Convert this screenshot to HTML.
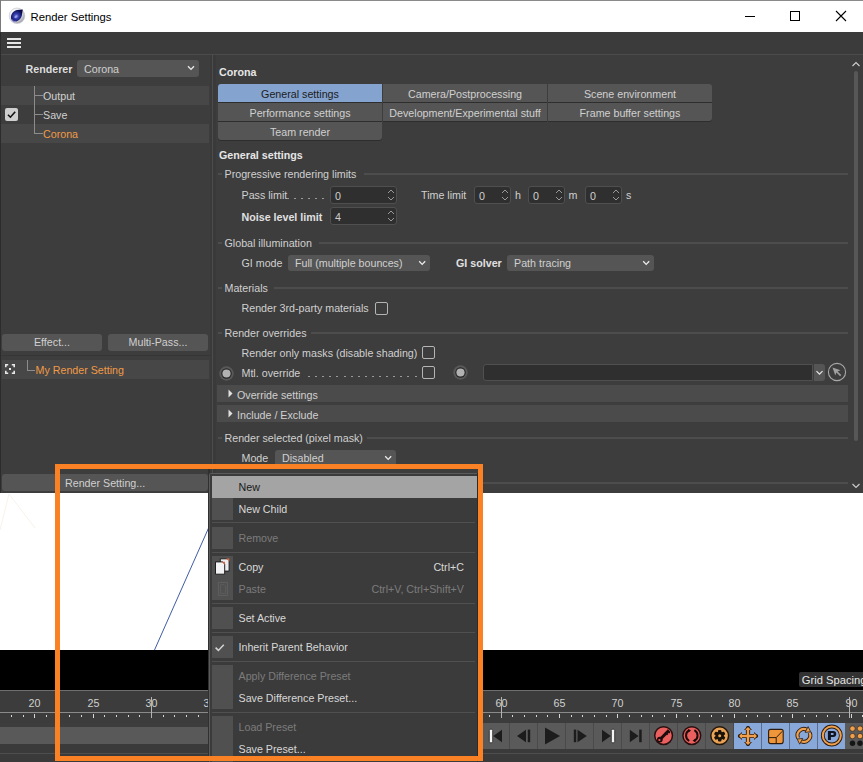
<!DOCTYPE html>
<html><head><meta charset="utf-8"><title>Render Settings</title>
<style>
html,body{margin:0;padding:0;}
body{width:863px;height:762px;overflow:hidden;position:relative;background:#3d3d3d;font-family:"Liberation Sans",sans-serif;}
body>div,body>svg{position:absolute;}
.t{white-space:nowrap;}
</style></head><body>
<div style="left:0px;top:0px;width:863px;height:762px;background:#3d3d3d;"></div>
<div style="left:0px;top:0px;width:863px;height:32px;background:#ffffff;"></div>
<div style="left:0px;top:0px;width:863px;height:1px;background:#8a8a8a;"></div>
<div style="left:0px;top:0px;width:1px;height:32px;background:#7a7a7a;"></div>
<div style="left:0px;top:32px;width:1px;height:461px;background:#2c2c2c;"></div>
<svg style="left:0;top:0" width="32" height="32" viewBox="0 0 32 32"><defs><radialGradient id="sil" cx="35%" cy="30%" r="75%"><stop offset="0" stop-color="#ffffff"/><stop offset="0.6" stop-color="#e4e4ea"/><stop offset="1" stop-color="#9a9aa4"/></radialGradient><radialGradient id="blu" cx="45%" cy="55%" r="55%"><stop offset="0" stop-color="#7078d8"/><stop offset="0.45" stop-color="#2c34a0"/><stop offset="1" stop-color="#0a0a48"/></radialGradient></defs><circle cx="17" cy="15.8" r="7.8" fill="url(#sil)" stroke="#c4c4cc" stroke-width="0.6"/><path d="M11 18.2C10.6 14.2 13.4 10.6 17.4 10.1L22.8 9.6L22 14.6C21.6 18.8 18.2 21.8 14.6 21.6C12.6 21.3 11.3 20 11 18.2Z" fill="url(#blu)"/><ellipse cx="16" cy="16.6" rx="1.8" ry="1.1" transform="rotate(-35 16 16.6)" fill="#9aa0f0" opacity="0.9"/><path d="M11.6 19.2C12.4 20.8 14 21.6 16 21.4" stroke="#8a8ae8" stroke-width="1" fill="none"/></svg>
<div class="t" style="top:9.58px;line-height:15px;font-size:11.3px;color:#000000;left:30.5px;">Render Settings</div>
<div style="left:745px;top:16px;width:10px;height:1px;background:#000;"></div>
<div style="left:790px;top:11px;width:10px;height:10px;border:1px solid #000;box-sizing:border-box;"></div>
<svg style="left:835px;top:10px" width="12" height="12" viewBox="0 0 12 12"><path d="M1 1L11 11M11 1L1 11" stroke="#000" stroke-width="1.1"/></svg>
<div style="left:1px;top:32px;width:862px;height:22px;background:#3b3b3b;"></div>
<div style="left:1px;top:54px;width:862px;height:1px;background:#4b4b4b;"></div>
<div style="left:7px;top:38px;width:14px;height:2px;background:#e6e6e6;"></div>
<div style="left:7px;top:42px;width:14px;height:2px;background:#e6e6e6;"></div>
<div style="left:7px;top:46px;width:14px;height:2px;background:#e6e6e6;"></div>
<div class="t" style="top:62.29px;line-height:14px;font-size:10.7px;color:#dcdcdc;font-weight:bold;left:25.5px;">Renderer</div>
<div style="left:77px;top:60px;width:122px;height:17px;background:#555555;border-radius:3px;"></div>
<div class="t" style="top:62.29px;line-height:14px;font-size:10.7px;color:#d0d0d0;left:84px;">Corona</div>
<svg style="left:187px;top:65px" width="9" height="6" viewBox="0 0 9 6"><path d="M1 1.3L4 4.4L7 1.3" stroke="#ececec" stroke-width="1.3" fill="none"/></svg>
<div style="left:1px;top:86px;width:208px;height:19px;background:#474747;"></div>
<div style="left:1px;top:124px;width:208px;height:19px;background:#474747;"></div>
<div style="left:34px;top:86px;width:1px;height:48px;background:#8c8c8c;"></div>
<div style="left:34px;top:95px;width:9px;height:1px;background:#8c8c8c;"></div>
<div style="left:34px;top:114px;width:9px;height:1px;background:#8c8c8c;"></div>
<div style="left:34px;top:133px;width:9px;height:1px;background:#8c8c8c;"></div>
<div class="t" style="top:89.29px;line-height:14px;font-size:10.7px;color:#d0d0d0;left:43px;">Output</div>
<div class="t" style="top:108.29px;line-height:14px;font-size:10.7px;color:#d0d0d0;left:43px;">Save</div>
<div class="t" style="top:127.29px;line-height:14px;font-size:10.7px;color:#f09a48;left:43px;">Corona</div>
<div style="left:5px;top:108px;width:13px;height:13px;background:#cfcfcf;border-radius:2px;"></div>
<svg style="left:5px;top:108px" width="13" height="13" viewBox="0 0 13 13"><path d="M3 6.8L5.4 9.2L10.2 3.8" stroke="#111" stroke-width="1.6" fill="none"/></svg>
<div style="left:2px;top:334px;width:100px;height:17px;background:#555555;border-radius:3px;"></div>
<div class="t" style="top:335.29px;line-height:14px;font-size:10.7px;color:#d0d0d0;left:-248px;width:600px;text-align:center;">Effect...</div>
<div style="left:108px;top:334px;width:100px;height:17px;background:#555555;border-radius:3px;"></div>
<div class="t" style="top:335.29px;line-height:14px;font-size:10.7px;color:#d0d0d0;left:-142px;width:600px;text-align:center;">Multi-Pass...</div>
<div style="left:1px;top:355px;width:209px;height:1px;background:#363636;"></div>
<div style="left:2px;top:360px;width:207px;height:19px;background:#474747;"></div>
<svg style="left:5px;top:364px" width="10" height="10" viewBox="0 0 10 10"><path d="M0.8 3.2V0.8H3.2M6.8 0.8H9.2V3.2M9.2 6.8V9.2H6.8M3.2 9.2H0.8V6.8" stroke="#e8e8e8" stroke-width="1.6" fill="none"/><rect x="4" y="4" width="2" height="2" fill="#e8e8e8"/></svg>
<div style="left:27px;top:360px;width:1px;height:11px;background:#8c8c8c;"></div>
<div style="left:27px;top:370px;width:8px;height:1px;background:#8c8c8c;"></div>
<div class="t" style="top:363.29px;line-height:14px;font-size:10.7px;color:#f09a48;left:35.5px;">My Render Setting</div>
<div style="left:2px;top:474px;width:206px;height:17px;background:#555555;border-radius:3px;"></div>
<div class="t" style="top:476.29px;line-height:14px;font-size:10.7px;color:#d0d0d0;left:65px;">Render Setting...</div>
<div style="left:210px;top:55px;width:2px;height:438px;background:#3a3a3a;"></div>
<div style="left:212px;top:55px;width:1px;height:438px;background:#4c4c4c;"></div>
<div style="left:213px;top:55px;width:3px;height:438px;background:#3a3a3a;"></div>
<div class="t" style="top:65.29px;line-height:14px;font-size:10.7px;color:#e6e6e6;font-weight:bold;left:219px;">Corona</div>
<div style="left:218px;top:84px;width:164px;height:18px;background:#84a3cf;border-top-left-radius:3px;box-shadow:0 1px 0 #2e2e2e;"></div>
<div class="t" style="top:86.79px;line-height:14px;font-size:10.7px;color:#1c1c1c;left:0px;width:600px;text-align:center;">General settings</div>
<div style="left:383px;top:84px;width:164px;height:18px;background:#555555;box-shadow:0 1px 0 #2e2e2e;"></div>
<div class="t" style="top:86.79px;line-height:14px;font-size:10.7px;color:#d0d0d0;left:165px;width:600px;text-align:center;">Camera/Postprocessing</div>
<div style="left:548px;top:84px;width:164px;height:18px;background:#555555;border-top-right-radius:3px;box-shadow:0 1px 0 #2e2e2e;"></div>
<div class="t" style="top:86.79px;line-height:14px;font-size:10.7px;color:#d0d0d0;left:330px;width:600px;text-align:center;">Scene environment</div>
<div style="left:218px;top:103px;width:164px;height:18px;background:#555555;box-shadow:0 1px 0 #2e2e2e;"></div>
<div class="t" style="top:105.79px;line-height:14px;font-size:10.7px;color:#d0d0d0;left:0px;width:600px;text-align:center;">Performance settings</div>
<div style="left:383px;top:103px;width:164px;height:18px;background:#555555;box-shadow:0 1px 0 #2e2e2e;"></div>
<div class="t" style="top:105.79px;line-height:14px;font-size:10.7px;color:#d0d0d0;left:165px;width:600px;text-align:center;">Development/Experimental stuff</div>
<div style="left:548px;top:103px;width:164px;height:18px;background:#555555;border-bottom-right-radius:3px;box-shadow:0 1px 0 #2e2e2e;"></div>
<div class="t" style="top:105.79px;line-height:14px;font-size:10.7px;color:#d0d0d0;left:330px;width:600px;text-align:center;">Frame buffer settings</div>
<div style="left:218px;top:122px;width:164px;height:18px;background:#555555;border-bottom-left-radius:3px;border-bottom-right-radius:3px;box-shadow:0 1px 0 #2e2e2e;"></div>
<div class="t" style="top:124.79px;line-height:14px;font-size:10.7px;color:#d0d0d0;left:0px;width:600px;text-align:center;">Team render</div>
<div class="t" style="top:148.29px;line-height:14px;font-size:10.7px;color:#e6e6e6;font-weight:bold;left:219px;">General settings</div>
<div style="left:218px;top:173px;width:4px;height:2px;background:#4d4d4d;"></div>
<div class="t" style="top:166.89px;line-height:14px;font-size:10.7px;color:#d0d0d0;left:224.5px;">Progressive rendering limits</div>
<div style="left:364px;top:173px;width:484px;height:2px;background:#4d4d4d;"></div>
<div class="t" style="top:188.29px;line-height:14px;font-size:10.7px;color:#d0d0d0;left:241.5px;">Pass limit</div>
<div style="left:287px;top:198px;width:2px;height:1px;background:#9a9a9a;"></div>
<div style="left:294px;top:198px;width:2px;height:1px;background:#9a9a9a;"></div>
<div style="left:301px;top:198px;width:2px;height:1px;background:#9a9a9a;"></div>
<div style="left:308px;top:198px;width:2px;height:1px;background:#9a9a9a;"></div>
<div style="left:315px;top:198px;width:2px;height:1px;background:#9a9a9a;"></div>
<div style="left:322px;top:198px;width:2px;height:1px;background:#9a9a9a;"></div>
<div style="left:330px;top:186px;width:67px;height:18px;background:#2f2f2f;border:1px solid #4f4f4f;box-sizing:border-box;border-radius:3px;"></div>
<div class="t" style="top:188.79px;line-height:14px;font-size:10.7px;color:#d0d0d0;left:335px;">0</div>
<svg style="left:387px;top:189px" width="8" height="12" viewBox="0 0 8 12"><path d="M1 4L4 1L7 4M1 8L4 11L7 8" stroke="#9a9a9a" stroke-width="1" fill="none"/></svg>
<div class="t" style="top:188.29px;line-height:14px;font-size:10.7px;color:#d0d0d0;left:421px;">Time limit</div>
<div style="left:474px;top:186px;width:37px;height:18px;background:#2f2f2f;border:1px solid #4f4f4f;box-sizing:border-box;border-radius:3px;"></div>
<div class="t" style="top:188.79px;line-height:14px;font-size:10.7px;color:#d0d0d0;left:479px;">0</div>
<svg style="left:501px;top:189px" width="8" height="12" viewBox="0 0 8 12"><path d="M1 4L4 1L7 4M1 8L4 11L7 8" stroke="#9a9a9a" stroke-width="1" fill="none"/></svg>
<div class="t" style="top:188.29px;line-height:14px;font-size:10.7px;color:#d0d0d0;left:515px;">h</div>
<div style="left:528px;top:186px;width:37px;height:18px;background:#2f2f2f;border:1px solid #4f4f4f;box-sizing:border-box;border-radius:3px;"></div>
<div class="t" style="top:188.79px;line-height:14px;font-size:10.7px;color:#d0d0d0;left:533px;">0</div>
<svg style="left:555px;top:189px" width="8" height="12" viewBox="0 0 8 12"><path d="M1 4L4 1L7 4M1 8L4 11L7 8" stroke="#9a9a9a" stroke-width="1" fill="none"/></svg>
<div class="t" style="top:188.29px;line-height:14px;font-size:10.7px;color:#d0d0d0;left:568.5px;">m</div>
<div style="left:585px;top:186px;width:37px;height:18px;background:#2f2f2f;border:1px solid #4f4f4f;box-sizing:border-box;border-radius:3px;"></div>
<div class="t" style="top:188.79px;line-height:14px;font-size:10.7px;color:#d0d0d0;left:590px;">0</div>
<svg style="left:612px;top:189px" width="8" height="12" viewBox="0 0 8 12"><path d="M1 4L4 1L7 4M1 8L4 11L7 8" stroke="#9a9a9a" stroke-width="1" fill="none"/></svg>
<div class="t" style="top:188.29px;line-height:14px;font-size:10.7px;color:#d0d0d0;left:626px;">s</div>
<div class="t" style="top:210.29px;line-height:14px;font-size:10.7px;color:#e0e0e0;font-weight:bold;left:241.5px;">Noise level limit</div>
<div style="left:330px;top:207px;width:67px;height:18px;background:#2f2f2f;border:1px solid #4f4f4f;box-sizing:border-box;border-radius:3px;"></div>
<div class="t" style="top:209.79px;line-height:14px;font-size:10.7px;color:#d0d0d0;left:335px;">4</div>
<svg style="left:387px;top:210px" width="8" height="12" viewBox="0 0 8 12"><path d="M1 4L4 1L7 4M1 8L4 11L7 8" stroke="#9a9a9a" stroke-width="1" fill="none"/></svg>
<div style="left:218px;top:242px;width:4px;height:2px;background:#4d4d4d;"></div>
<div class="t" style="top:235.89px;line-height:14px;font-size:10.7px;color:#d0d0d0;left:224.5px;">Global illumination</div>
<div style="left:319px;top:242px;width:529px;height:2px;background:#4d4d4d;"></div>
<div class="t" style="top:256.29px;line-height:14px;font-size:10.7px;color:#d0d0d0;left:241.5px;">GI mode</div>
<div style="left:288px;top:255px;width:142px;height:16px;background:#555555;border-radius:3px;"></div>
<div class="t" style="top:256.29px;line-height:14px;font-size:10.7px;color:#d0d0d0;left:295px;">Full (multiple bounces)</div>
<svg style="left:418px;top:260px" width="9" height="6" viewBox="0 0 9 6"><path d="M1.2 1.3L4.2 4.4L7.2 1.3" stroke="#ececec" stroke-width="1.3" fill="none"/></svg>
<div class="t" style="top:256.29px;line-height:14px;font-size:10.7px;color:#e0e0e0;font-weight:bold;left:456px;">GI solver</div>
<div style="left:507px;top:255px;width:147px;height:16px;background:#555555;border-radius:3px;"></div>
<div class="t" style="top:256.29px;line-height:14px;font-size:10.7px;color:#d0d0d0;left:514px;">Path tracing</div>
<svg style="left:642px;top:260px" width="9" height="6" viewBox="0 0 9 6"><path d="M1.2 1.3L4.2 4.4L7.2 1.3" stroke="#ececec" stroke-width="1.3" fill="none"/></svg>
<div style="left:218px;top:287px;width:4px;height:2px;background:#4d4d4d;"></div>
<div class="t" style="top:280.89px;line-height:14px;font-size:10.7px;color:#d0d0d0;left:224.5px;">Materials</div>
<div style="left:274px;top:287px;width:574px;height:2px;background:#4d4d4d;"></div>
<div class="t" style="top:301.29px;line-height:14px;font-size:10.7px;color:#d0d0d0;left:241.5px;">Render 3rd-party materials</div>
<div style="left:375px;top:302px;width:13px;height:13px;border:1px solid #b4b4b4;box-sizing:border-box;border-radius:2px;"></div>
<div style="left:218px;top:332px;width:4px;height:2px;background:#4d4d4d;"></div>
<div class="t" style="top:325.89px;line-height:14px;font-size:10.7px;color:#d0d0d0;left:224.5px;">Render overrides</div>
<div style="left:311px;top:332px;width:537px;height:2px;background:#4d4d4d;"></div>
<div class="t" style="top:346.29px;line-height:14px;font-size:10.7px;color:#d0d0d0;left:241.5px;">Render only masks (disable shading)</div>
<div style="left:422px;top:346px;width:13px;height:13px;border:1px solid #b4b4b4;box-sizing:border-box;border-radius:2px;"></div>
<svg style="left:218.6px;top:365.6px" width="15" height="15" viewBox="0 0 15 15"><circle cx="7.5" cy="7.5" r="7.2" fill="#595959"/><circle cx="7.5" cy="7.5" r="5.2" fill="#242424"/><circle cx="7.5" cy="7.5" r="4.1" fill="#b2b2b2"/></svg>
<div class="t" style="top:366.29px;line-height:14px;font-size:10.7px;color:#d0d0d0;left:241.5px;">Mtl. override</div>
<div style="left:308.0px;top:376px;width:2px;height:1px;background:#9a9a9a;"></div>
<div style="left:315.1px;top:376px;width:2px;height:1px;background:#9a9a9a;"></div>
<div style="left:322.2px;top:376px;width:2px;height:1px;background:#9a9a9a;"></div>
<div style="left:329.3px;top:376px;width:2px;height:1px;background:#9a9a9a;"></div>
<div style="left:336.4px;top:376px;width:2px;height:1px;background:#9a9a9a;"></div>
<div style="left:343.5px;top:376px;width:2px;height:1px;background:#9a9a9a;"></div>
<div style="left:350.6px;top:376px;width:2px;height:1px;background:#9a9a9a;"></div>
<div style="left:357.7px;top:376px;width:2px;height:1px;background:#9a9a9a;"></div>
<div style="left:364.8px;top:376px;width:2px;height:1px;background:#9a9a9a;"></div>
<div style="left:371.9px;top:376px;width:2px;height:1px;background:#9a9a9a;"></div>
<div style="left:379.0px;top:376px;width:2px;height:1px;background:#9a9a9a;"></div>
<div style="left:386.1px;top:376px;width:2px;height:1px;background:#9a9a9a;"></div>
<div style="left:393.2px;top:376px;width:2px;height:1px;background:#9a9a9a;"></div>
<div style="left:400.3px;top:376px;width:2px;height:1px;background:#9a9a9a;"></div>
<div style="left:407.4px;top:376px;width:2px;height:1px;background:#9a9a9a;"></div>
<div style="left:414.5px;top:376px;width:2px;height:1px;background:#9a9a9a;"></div>
<div style="left:422px;top:366px;width:13px;height:13px;border:1px solid #b4b4b4;box-sizing:border-box;border-radius:2px;"></div>
<svg style="left:452.5px;top:365.4px" width="15" height="15" viewBox="0 0 15 15"><circle cx="7.5" cy="7.5" r="7.2" fill="#595959"/><circle cx="7.5" cy="7.5" r="5.2" fill="#242424"/><circle cx="7.5" cy="7.5" r="4.1" fill="#b2b2b2"/></svg>
<div style="left:483px;top:364px;width:330px;height:17px;background:#2f2f2f;border:1px solid #4f4f4f;box-sizing:border-box;border-radius:3px 0 0 3px;"></div>
<div style="left:814px;top:364px;width:11px;height:17px;background:#555555;border-radius:0 3px 3px 0;"></div>
<svg style="left:815px;top:370px" width="9" height="6" viewBox="0 0 9 6"><path d="M1.5 1.2L4.5 4.2L7.5 1.2" stroke="#e8e8e8" stroke-width="1.2" fill="none"/></svg>
<svg style="left:827px;top:362px" width="20" height="20" viewBox="0 0 20 20"><circle cx="10" cy="10" r="8.6" fill="none" stroke="#a8a8a8" stroke-width="1.1"/><path d="M5.5 5.5L13.5 8.3L10.6 9.4L14.3 13.1L13.1 14.3L9.4 10.6L8.3 13.5Z" fill="#a0a0a0"/></svg>
<div style="left:217px;top:385px;width:631px;height:17px;background:#4b4b4b;"></div>
<svg style="left:228px;top:389px" width="5" height="9" viewBox="0 0 5 9"><path d="M0.5 0.5L4.5 4.5L0.5 8.5Z" fill="#e0e0e0"/></svg>
<div class="t" style="top:388.09px;line-height:14px;font-size:10.7px;color:#d0d0d0;left:237px;">Override settings</div>
<div style="left:217px;top:405px;width:631px;height:17px;background:#4b4b4b;"></div>
<svg style="left:228px;top:409px" width="5" height="9" viewBox="0 0 5 9"><path d="M0.5 0.5L4.5 4.5L0.5 8.5Z" fill="#e0e0e0"/></svg>
<div class="t" style="top:408.09px;line-height:14px;font-size:10.7px;color:#d0d0d0;left:237px;">Include / Exclude</div>
<div style="left:218px;top:437px;width:4px;height:2px;background:#4d4d4d;"></div>
<div class="t" style="top:430.89px;line-height:14px;font-size:10.7px;color:#d0d0d0;left:224.5px;">Render selected (pixel mask)</div>
<div style="left:367px;top:437px;width:481px;height:2px;background:#4d4d4d;"></div>
<div class="t" style="top:451.29px;line-height:14px;font-size:10.7px;color:#d0d0d0;left:241.5px;">Mode</div>
<div style="left:275px;top:450px;width:121px;height:16px;background:#555555;border-radius:3px;"></div>
<div class="t" style="top:451.29px;line-height:14px;font-size:10.7px;color:#d0d0d0;left:282px;">Disabled</div>
<svg style="left:384px;top:455px" width="9" height="6" viewBox="0 0 9 6"><path d="M1.2 1.3L4.2 4.4L7.2 1.3" stroke="#ececec" stroke-width="1.3" fill="none"/></svg>
<div style="left:218px;top:482px;width:630px;height:2px;background:#4d4d4d;"></div>
<svg style="left:851px;top:60px" width="10" height="8" viewBox="0 0 10 8"><path d="M1.5 6L5 2.5L8.5 6" stroke="#cfcfcf" stroke-width="1.1" fill="none"/></svg>
<div style="left:854px;top:71px;width:4px;height:370px;background:#575757;border-radius:2px;"></div>
<svg style="left:851px;top:482px" width="10" height="8" viewBox="0 0 10 8"><path d="M1.5 2L5 5.5L8.5 2" stroke="#cfcfcf" stroke-width="1.1" fill="none"/></svg>
<div style="left:0px;top:493px;width:863px;height:157px;background:#ffffff;"></div>
<svg style="left:0;top:493px" width="863" height="157"><path d="M154.5 157L209 34" stroke="#2a4a9a" stroke-width="0.9" fill="none"/><path d="M0 37L9 1L35 35" stroke="#f6eee6" stroke-width="0.8" fill="none"/></svg>
<div style="left:0px;top:650px;width:863px;height:40px;background:#000000;"></div>
<div style="left:799px;top:672px;width:70px;height:15px;background:#323232;border-radius:2px;"></div>
<div class="t" style="top:672.62px;line-height:15px;font-size:11.2px;color:#e4e4e4;left:801.8px;">Grid Spacing</div>
<div style="left:0px;top:690px;width:863px;height:1px;background:#6e6e6e;"></div>
<div style="left:0px;top:691px;width:863px;height:32px;background:#3c3c3c;"></div>
<div style="left:0px;top:712px;width:863px;height:1px;background:#8a8a8a;"></div>
<div style="left:-1px;top:715px;width:1px;height:2px;background:#d8d8d8;"></div>
<div style="left:11px;top:715px;width:1px;height:2px;background:#d8d8d8;"></div>
<div style="left:23px;top:715px;width:1px;height:2px;background:#d8d8d8;"></div>
<div style="left:34px;top:714px;width:1px;height:4px;background:#d8d8d8;"></div>
<div class="t" style="top:696.29px;line-height:14px;font-size:10.7px;color:#d0d0d0;left:-265.5px;width:600px;text-align:center;">20</div>
<div style="left:46px;top:715px;width:1px;height:2px;background:#d8d8d8;"></div>
<div style="left:58px;top:715px;width:1px;height:2px;background:#d8d8d8;"></div>
<div style="left:69px;top:715px;width:1px;height:2px;background:#d8d8d8;"></div>
<div style="left:81px;top:715px;width:1px;height:2px;background:#d8d8d8;"></div>
<div style="left:93px;top:714px;width:1px;height:4px;background:#d8d8d8;"></div>
<div class="t" style="top:696.29px;line-height:14px;font-size:10.7px;color:#d0d0d0;left:-206.5px;width:600px;text-align:center;">25</div>
<div style="left:104px;top:715px;width:1px;height:2px;background:#d8d8d8;"></div>
<div style="left:116px;top:715px;width:1px;height:2px;background:#d8d8d8;"></div>
<div style="left:128px;top:715px;width:1px;height:2px;background:#d8d8d8;"></div>
<div style="left:139px;top:715px;width:1px;height:2px;background:#d8d8d8;"></div>
<div style="left:151px;top:714px;width:1px;height:4px;background:#d8d8d8;"></div>
<div class="t" style="top:696.29px;line-height:14px;font-size:10.7px;color:#d0d0d0;left:-148.5px;width:600px;text-align:center;">30</div>
<div style="left:163px;top:715px;width:1px;height:2px;background:#d8d8d8;"></div>
<div style="left:174px;top:715px;width:1px;height:2px;background:#d8d8d8;"></div>
<div style="left:186px;top:715px;width:1px;height:2px;background:#d8d8d8;"></div>
<div style="left:198px;top:715px;width:1px;height:2px;background:#d8d8d8;"></div>
<div style="left:209px;top:714px;width:1px;height:4px;background:#d8d8d8;"></div>
<div class="t" style="top:696.29px;line-height:14px;font-size:10.7px;color:#d0d0d0;left:-90.5px;width:600px;text-align:center;">35</div>
<div style="left:221px;top:715px;width:1px;height:2px;background:#d8d8d8;"></div>
<div style="left:233px;top:715px;width:1px;height:2px;background:#d8d8d8;"></div>
<div style="left:244px;top:715px;width:1px;height:2px;background:#d8d8d8;"></div>
<div style="left:256px;top:715px;width:1px;height:2px;background:#d8d8d8;"></div>
<div style="left:268px;top:714px;width:1px;height:4px;background:#d8d8d8;"></div>
<div class="t" style="top:696.29px;line-height:14px;font-size:10.7px;color:#d0d0d0;left:-31.5px;width:600px;text-align:center;">40</div>
<div style="left:279px;top:715px;width:1px;height:2px;background:#d8d8d8;"></div>
<div style="left:291px;top:715px;width:1px;height:2px;background:#d8d8d8;"></div>
<div style="left:303px;top:715px;width:1px;height:2px;background:#d8d8d8;"></div>
<div style="left:314px;top:715px;width:1px;height:2px;background:#d8d8d8;"></div>
<div style="left:326px;top:714px;width:1px;height:4px;background:#d8d8d8;"></div>
<div class="t" style="top:696.29px;line-height:14px;font-size:10.7px;color:#d0d0d0;left:26.5px;width:600px;text-align:center;">45</div>
<div style="left:338px;top:715px;width:1px;height:2px;background:#d8d8d8;"></div>
<div style="left:349px;top:715px;width:1px;height:2px;background:#d8d8d8;"></div>
<div style="left:361px;top:715px;width:1px;height:2px;background:#d8d8d8;"></div>
<div style="left:373px;top:715px;width:1px;height:2px;background:#d8d8d8;"></div>
<div style="left:384px;top:714px;width:1px;height:4px;background:#d8d8d8;"></div>
<div class="t" style="top:696.29px;line-height:14px;font-size:10.7px;color:#d0d0d0;left:84.5px;width:600px;text-align:center;">50</div>
<div style="left:396px;top:715px;width:1px;height:2px;background:#d8d8d8;"></div>
<div style="left:408px;top:715px;width:1px;height:2px;background:#d8d8d8;"></div>
<div style="left:419px;top:715px;width:1px;height:2px;background:#d8d8d8;"></div>
<div style="left:431px;top:715px;width:1px;height:2px;background:#d8d8d8;"></div>
<div style="left:442px;top:714px;width:1px;height:4px;background:#d8d8d8;"></div>
<div class="t" style="top:696.29px;line-height:14px;font-size:10.7px;color:#d0d0d0;left:142.5px;width:600px;text-align:center;">55</div>
<div style="left:454px;top:715px;width:1px;height:2px;background:#d8d8d8;"></div>
<div style="left:466px;top:715px;width:1px;height:2px;background:#d8d8d8;"></div>
<div style="left:477px;top:715px;width:1px;height:2px;background:#d8d8d8;"></div>
<div style="left:489px;top:715px;width:1px;height:2px;background:#d8d8d8;"></div>
<div style="left:501px;top:714px;width:1px;height:4px;background:#d8d8d8;"></div>
<div class="t" style="top:696.29px;line-height:14px;font-size:10.7px;color:#d0d0d0;left:201.5px;width:600px;text-align:center;">60</div>
<div style="left:512px;top:715px;width:1px;height:2px;background:#d8d8d8;"></div>
<div style="left:524px;top:715px;width:1px;height:2px;background:#d8d8d8;"></div>
<div style="left:536px;top:715px;width:1px;height:2px;background:#d8d8d8;"></div>
<div style="left:547px;top:715px;width:1px;height:2px;background:#d8d8d8;"></div>
<div style="left:559px;top:714px;width:1px;height:4px;background:#d8d8d8;"></div>
<div class="t" style="top:696.29px;line-height:14px;font-size:10.7px;color:#d0d0d0;left:259.5px;width:600px;text-align:center;">65</div>
<div style="left:571px;top:715px;width:1px;height:2px;background:#d8d8d8;"></div>
<div style="left:582px;top:715px;width:1px;height:2px;background:#d8d8d8;"></div>
<div style="left:594px;top:715px;width:1px;height:2px;background:#d8d8d8;"></div>
<div style="left:606px;top:715px;width:1px;height:2px;background:#d8d8d8;"></div>
<div style="left:617px;top:714px;width:1px;height:4px;background:#d8d8d8;"></div>
<div class="t" style="top:696.29px;line-height:14px;font-size:10.7px;color:#d0d0d0;left:317.5px;width:600px;text-align:center;">70</div>
<div style="left:629px;top:715px;width:1px;height:2px;background:#d8d8d8;"></div>
<div style="left:641px;top:715px;width:1px;height:2px;background:#d8d8d8;"></div>
<div style="left:652px;top:715px;width:1px;height:2px;background:#d8d8d8;"></div>
<div style="left:664px;top:715px;width:1px;height:2px;background:#d8d8d8;"></div>
<div style="left:676px;top:714px;width:1px;height:4px;background:#d8d8d8;"></div>
<div class="t" style="top:696.29px;line-height:14px;font-size:10.7px;color:#d0d0d0;left:376.5px;width:600px;text-align:center;">75</div>
<div style="left:687px;top:715px;width:1px;height:2px;background:#d8d8d8;"></div>
<div style="left:699px;top:715px;width:1px;height:2px;background:#d8d8d8;"></div>
<div style="left:711px;top:715px;width:1px;height:2px;background:#d8d8d8;"></div>
<div style="left:722px;top:715px;width:1px;height:2px;background:#d8d8d8;"></div>
<div style="left:734px;top:714px;width:1px;height:4px;background:#d8d8d8;"></div>
<div class="t" style="top:696.29px;line-height:14px;font-size:10.7px;color:#d0d0d0;left:434.5px;width:600px;text-align:center;">80</div>
<div style="left:746px;top:715px;width:1px;height:2px;background:#d8d8d8;"></div>
<div style="left:757px;top:715px;width:1px;height:2px;background:#d8d8d8;"></div>
<div style="left:769px;top:715px;width:1px;height:2px;background:#d8d8d8;"></div>
<div style="left:781px;top:715px;width:1px;height:2px;background:#d8d8d8;"></div>
<div style="left:792px;top:714px;width:1px;height:4px;background:#d8d8d8;"></div>
<div class="t" style="top:696.29px;line-height:14px;font-size:10.7px;color:#d0d0d0;left:492.5px;width:600px;text-align:center;">85</div>
<div style="left:804px;top:715px;width:1px;height:2px;background:#d8d8d8;"></div>
<div style="left:816px;top:715px;width:1px;height:2px;background:#d8d8d8;"></div>
<div style="left:827px;top:715px;width:1px;height:2px;background:#d8d8d8;"></div>
<div style="left:839px;top:715px;width:1px;height:2px;background:#d8d8d8;"></div>
<div style="left:851px;top:714px;width:1px;height:4px;background:#d8d8d8;"></div>
<div class="t" style="top:696.29px;line-height:14px;font-size:10.7px;color:#d0d0d0;left:551.5px;width:600px;text-align:center;">90</div>
<div style="left:862px;top:715px;width:1px;height:2px;background:#d8d8d8;"></div>
<div style="left:151px;top:697px;width:1px;height:21px;background:#b4b4b4;"></div>
<div style="left:501px;top:697px;width:1px;height:21px;background:#b4b4b4;"></div>
<div style="left:849px;top:697px;width:1px;height:21px;background:#b4b4b4;"></div>
<div style="left:627px;top:754px;width:1px;height:8px;background:#4e4e4e;"></div>
<div style="left:631px;top:754px;width:1px;height:8px;background:#4e4e4e;"></div>
<div style="left:637px;top:760px;width:14px;height:2px;background:#8a8a8a;"></div>
<div style="left:0px;top:727px;width:483px;height:17px;background:#595959;"></div>
<div style="left:0px;top:744px;width:863px;height:18px;background:#3a3a3a;"></div>
<div style="left:0px;top:753px;width:863px;height:1px;background:#4e4e4e;"></div>
<div style="left:483px;top:723px;width:380px;height:26px;background:#5a5a5a;"></div>
<div style="left:509px;top:723px;width:1px;height:26px;background:#4a4a4a;"></div>
<div style="left:537px;top:723px;width:1px;height:26px;background:#4a4a4a;"></div>
<div style="left:565px;top:723px;width:1px;height:26px;background:#4a4a4a;"></div>
<div style="left:593px;top:723px;width:1px;height:26px;background:#4a4a4a;"></div>
<div style="left:621px;top:723px;width:1px;height:26px;background:#4a4a4a;"></div>
<div style="left:649px;top:723px;width:1px;height:26px;background:#4a4a4a;"></div>
<div style="left:677px;top:723px;width:1px;height:26px;background:#4a4a4a;"></div>
<div style="left:705px;top:723px;width:1px;height:26px;background:#4a4a4a;"></div>
<div style="left:733px;top:723px;width:1px;height:26px;background:#4a4a4a;"></div>
<div style="left:734px;top:723px;width:28px;height:26px;background:#88a8da;"></div>
<div style="left:762px;top:723px;width:28px;height:26px;background:#88a8da;"></div>
<div style="left:790px;top:723px;width:28px;height:26px;background:#88a8da;"></div>
<div style="left:818px;top:723px;width:27px;height:26px;background:#88a8da;"></div>
<div style="left:761px;top:723px;width:1px;height:26px;background:#5b6e8e;"></div>
<div style="left:789px;top:723px;width:1px;height:26px;background:#5b6e8e;"></div>
<div style="left:817px;top:723px;width:1px;height:26px;background:#5b6e8e;"></div>
<svg style="left:481px;top:723px" width="382" height="26" viewBox="481 723 382 26"><rect x="489.3" y="729.3" width="3.4" height="13.4" rx="1" fill="#f4f4f4" stroke="#222" stroke-width="0.8"/><path d="M493.2 736L502 729.8V742.2Z" fill="#1c1c1c"/><path d="M517 736L526 729.8V742.2Z" fill="#1c1c1c"/><rect x="527.8" y="729.6" width="2.4" height="12.6" fill="#1c1c1c"/><path d="M545 727.4V744.4L560 736Z" fill="#1c1c1c"/><rect x="573.8" y="729.6" width="2.4" height="12.6" fill="#1c1c1c"/><path d="M577.5 729.8V742.2L586.8 736Z" fill="#1c1c1c"/><path d="M602 729.8V742.2L610.8 736Z" fill="#1c1c1c"/><rect x="611.3" y="729.3" width="3.4" height="13.4" rx="1" fill="#f4f4f4" stroke="#222" stroke-width="0.8"/><path d="M629.8 729.8V742.2L638.6 736Z" fill="#1c1c1c"/><rect x="639.2" y="729.6" width="2.5" height="12.6" fill="#1c1c1c"/><circle cx="663.6" cy="735.6" r="8.9" fill="#e9605e" stroke="#2a0e0e" stroke-width="1.5"/><path d="M661.2 738.2L669 730.4" stroke="#1c0c0c" stroke-width="3"/><circle cx="659.8" cy="739.6" r="2.9" fill="#1c0c0c"/><circle cx="659.4" cy="740" r="1.1" fill="#e9605e"/><path d="M665.2 732.4L667.6 734.8M667.2 730.4L669.8 733" stroke="#1c0c0c" stroke-width="1.6"/><circle cx="691.8" cy="735.6" r="8.9" fill="#e9605e" stroke="#2a0e0e" stroke-width="1.5"/><path d="M689.2 730.2A6.2 6.2 0 0 0 689.2 741" fill="none" stroke="#1c0c0c" stroke-width="2"/><path d="M694.4 730.2A6.2 6.2 0 0 1 694.4 741" fill="none" stroke="#1c0c0c" stroke-width="2"/><path d="M688 728.8L691 730.4L688.6 732.4Z M695.6 742.4L692.6 740.8L695 738.8Z" fill="#1c0c0c"/><circle cx="719.7" cy="735.7" r="8.9" fill="#e9a256" stroke="#241608" stroke-width="1.5"/><g transform="translate(719.7 735.7)" fill="#1a1208"><circle r="4.2"/><rect x="-1.7" y="-5.8" width="3.4" height="11.6" rx="1"/><rect x="-1.7" y="-5.8" width="3.4" height="11.6" rx="1" transform="rotate(60)"/><rect x="-1.7" y="-5.8" width="3.4" height="11.6" rx="1" transform="rotate(120)"/></g><circle cx="719.7" cy="735.7" r="1.5" fill="#e9a256"/><g stroke="#2c1c10" stroke-width="4.2" stroke-linecap="round"><path d="M740 736H756M748 728V744"/></g><g fill="#2c1c10"><path d="M737.8 736L742 732V740Z M758.2 736L754 732V740Z M748 725.8L744 730H752Z M748 746.2L744 742H752Z"/></g><g stroke="#f0a04c" stroke-width="2.4"><path d="M740 736H756M748 728V744"/></g><g fill="#f0a04c"><path d="M739 736L742 733.2V738.8Z M757 736L754 733.2V738.8Z M748 727L745.2 730H750.8Z M748 745L745.2 742H750.8Z"/></g><rect x="768.6" y="729.4" width="14.6" height="14.2" rx="2" fill="#f0963a" stroke="#2c1c10" stroke-width="1.1"/><path d="M769 737.6H776.2V743.4M776.2 737.6L782.2 731.4" fill="none" stroke="#2c1c10" stroke-width="1"/><g fill="none" stroke-linecap="butt"><path d="M798.1 738.1A6.4 6.4 0 0 1 806.6 729.6M809.7 732.7A6.4 6.4 0 0 1 801.2 741.2" stroke="#2c1c10" stroke-width="4"/><path d="M798.1 738.1A6.4 6.4 0 0 1 806.6 729.6M809.7 732.7A6.4 6.4 0 0 1 801.2 741.2" stroke="#f0a04c" stroke-width="2.2"/></g><path d="M810.6 731.7L808.1 726.6L805.1 732.4Z M797.2 739.1L799.7 744.2L802.7 738.4Z" fill="#f0a04c" stroke="#2c1c10" stroke-width="0.8" stroke-linejoin="round"/><circle cx="831.8" cy="735.5" r="9" fill="none" stroke="#2c1c10" stroke-width="3.8"/><circle cx="831.8" cy="735.5" r="9" fill="none" stroke="#f0a04c" stroke-width="2"/><path fill-rule="evenodd" fill="#0e1422" d="M827.9 730.9H833.2A3.05 3.05 0 0 1 833.2 737H830.9V740.1H827.9Z M830.9 733.1H832.8A0.95 0.95 0 0 1 832.8 735H830.9Z"/><g fill="#f0a04c" stroke="#2c1c10" stroke-width="0.6"><circle cx="852.5" cy="728.6" r="2.7"/><circle cx="860" cy="728.6" r="2.7"/><circle cx="852.5" cy="736.1" r="2.7"/><circle cx="860" cy="736.1" r="2.7"/></g><g fill="#151515"><circle cx="852.5" cy="743.2" r="2.7"/><circle cx="860" cy="743.2" r="2.7"/></g></svg>
<div style="left:207.6px;top:469px;width:2px;height:293px;background:#303030;"></div>
<div style="left:209px;top:473px;width:269px;height:289px;background:#2b2b2b;"></div>
<div style="left:209px;top:473px;width:268px;height:289px;background:#5a5a5a;border-top-left-radius:2px;"></div>
<div style="left:210px;top:474px;width:267px;height:288px;background:#3b3b3b;"></div>
<div style="left:212px;top:476px;width:265px;height:22px;background:#a4a4a4;"></div>
<div style="left:212px;top:498px;width:21px;height:22px;background:#505050;"></div>
<div style="left:212px;top:527px;width:21px;height:22px;background:#505050;"></div>
<div style="left:212px;top:556px;width:21px;height:44px;background:#505050;"></div>
<div style="left:212px;top:607px;width:21px;height:22px;background:#505050;"></div>
<div style="left:212px;top:636px;width:21px;height:22px;background:#505050;"></div>
<div style="left:212px;top:665px;width:21px;height:44px;background:#505050;"></div>
<div style="left:212px;top:716px;width:21px;height:46px;background:#505050;"></div>
<div style="left:212px;top:522px;width:263px;height:1px;background:#505050;"></div>
<div style="left:212px;top:552px;width:263px;height:1px;background:#505050;"></div>
<div style="left:212px;top:603px;width:263px;height:1px;background:#505050;"></div>
<div style="left:212px;top:632px;width:263px;height:1px;background:#505050;"></div>
<div style="left:212px;top:661px;width:263px;height:1px;background:#505050;"></div>
<div style="left:212px;top:712px;width:263px;height:1px;background:#505050;"></div>
<div class="t" style="top:480.29px;line-height:14px;font-size:10.7px;color:#1a1a1a;left:238.5px;">New</div>
<div class="t" style="top:502.29px;line-height:14px;font-size:10.7px;color:#d8d8d8;left:238.5px;">New Child</div>
<div class="t" style="top:531.29px;line-height:14px;font-size:10.7px;color:#7c7c7c;left:238.5px;">Remove</div>
<div class="t" style="top:560.29px;line-height:14px;font-size:10.7px;color:#d8d8d8;left:238.5px;">Copy</div>
<div class="t" style="top:560.29px;line-height:14px;font-size:10.7px;color:#d8d8d8;left:-136px;width:600px;text-align:right;">Ctrl+C</div>
<div class="t" style="top:582.29px;line-height:14px;font-size:10.7px;color:#7c7c7c;left:238.5px;">Paste</div>
<div class="t" style="top:582.29px;line-height:14px;font-size:10.7px;color:#7c7c7c;left:-136px;width:600px;text-align:right;">Ctrl+V, Ctrl+Shift+V</div>
<div class="t" style="top:611.29px;line-height:14px;font-size:10.7px;color:#d8d8d8;left:238.5px;">Set Active</div>
<div class="t" style="top:640.29px;line-height:14px;font-size:10.7px;color:#d8d8d8;left:238.5px;">Inherit Parent Behavior</div>
<div class="t" style="top:669.29px;line-height:14px;font-size:10.7px;color:#7c7c7c;left:238.5px;">Apply Difference Preset</div>
<div class="t" style="top:691.29px;line-height:14px;font-size:10.7px;color:#d8d8d8;left:238.5px;">Save Difference Preset...</div>
<div class="t" style="top:720.29px;line-height:14px;font-size:10.7px;color:#7c7c7c;left:238.5px;">Load Preset</div>
<div class="t" style="top:742.29px;line-height:14px;font-size:10.7px;color:#d8d8d8;left:238.5px;">Save Preset...</div>
<svg style="left:214px;top:641px" width="13" height="12" viewBox="0 0 13 12"><path d="M1.6 6.6L4.4 9.4L9.8 3.8" stroke="#d4d4d4" stroke-width="1.5" fill="none"/></svg>
<svg style="left:212px;top:556px" width="21" height="44" viewBox="0 0 21 44"><path d="M8.3 2.8H15.4L17.1 4.5V15.1H8.3Z" fill="#ececf0" stroke="#1e1e1e" stroke-width="1"/><path d="M3.5 5.9H10.8L12.7 7.8V18.2H3.5Z" fill="#f2f2f4" stroke="#1e1e1e" stroke-width="1"/><path d="M14.2 2.6H17.3V5.6Z" fill="#e0643a"/><path d="M9.6 5.8H12.9V9Z" fill="#c86040"/><path d="M6.4 26.4H15.4V39.4H6.4Z" fill="none" stroke="#606060" stroke-width="1"/><path d="M8.5 28.6H12.2L13.6 30V37.4H8.5Z" fill="none" stroke="#5c5c5c" stroke-width="0.9"/></svg>
<div style="left:55px;top:464px;width:428px;height:297px;border:5px solid #fa8224;box-sizing:border-box;"></div>
</body></html>
